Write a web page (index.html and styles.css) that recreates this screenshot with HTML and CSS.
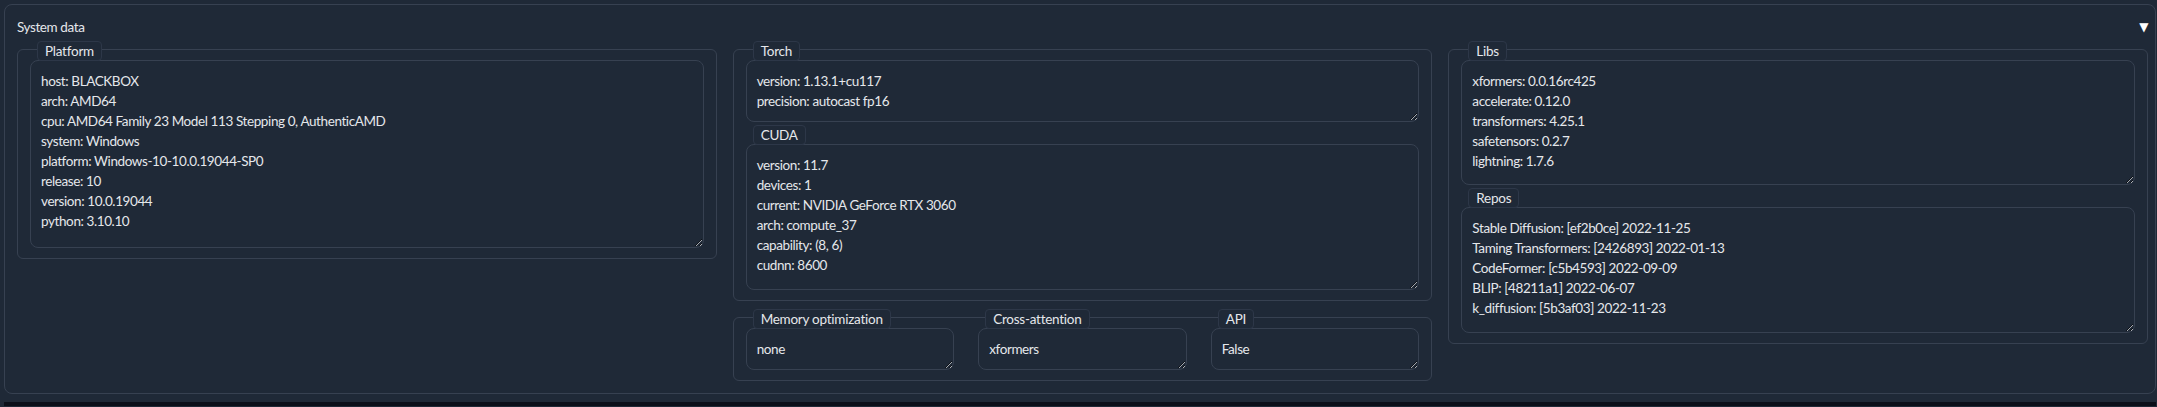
FILE: index.html
```html
<!DOCTYPE html>
<html lang="en">
<head>
  <meta charset="UTF-8">
  <meta name="viewport" content="width=device-width, initial-scale=1.0">
  <title>System data</title>
  <link rel="stylesheet" href="styles.css">
</head>
<body>
  <div class="panel">
    <div class="panel-header">
      <span>System data</span>
      <span class="arrow">&#9660;</span>
    </div>
    <div class="columns">
      <div class="group">
        <div class="label">Platform</div>
        <textarea class="box box-platform" readonly>host: BLACKBOX
arch: AMD64
cpu: AMD64 Family 23 Model 113 Stepping 0, AuthenticAMD
system: Windows
platform: Windows-10-10.0.19044-SP0
release: 10
version: 10.0.19044
python: 3.10.10</textarea>
      </div>
      <div class="stack">
        <div class="group">
          <div class="label">Torch</div>
          <textarea class="box box-torch" readonly>version: 1.13.1+cu117
precision: autocast fp16</textarea>
          <div class="label label-sub">CUDA</div>
          <textarea class="box box-cuda" readonly>version: 11.7
devices: 1
current: NVIDIA GeForce RTX 3060
arch: compute_37
capability: (8, 6)
cudnn: 8600</textarea>
        </div>
        <div class="group group-row">
          <div class="cell">
            <div class="label">Memory optimization</div>
            <textarea class="box box-small" readonly>none</textarea>
          </div>
          <div class="cell">
            <div class="label">Cross-attention</div>
            <textarea class="box box-small" readonly>xformers</textarea>
          </div>
          <div class="cell">
            <div class="label">API</div>
            <textarea class="box box-small" readonly>False</textarea>
          </div>
        </div>
      </div>
      <div class="group">
        <div class="label">Libs</div>
        <textarea class="box box-libs" readonly>xformers: 0.0.16rc425
accelerate: 0.12.0
transformers: 4.25.1
safetensors: 0.2.7
lightning: 1.7.6</textarea>
        <div class="label label-sub">Repos</div>
        <textarea class="box box-repos" readonly>Stable Diffusion: [ef2b0ce] 2022-11-25
Taming Transformers: [2426893] 2022-01-13
CodeFormer: [c5b4593] 2022-09-09
BLIP: [48211a1] 2022-06-07
k_diffusion: [5b3af03] 2022-11-23</textarea>
      </div>
    </div>
  </div>
  <div class="bottom-strip"></div>
</body>
</html>
```

FILE: styles.css
```css
*{
  margin: 0;
  padding: 0;
  box-sizing: border-box;
}
html,body{
  background-color: #1f2937;
  height: 100%;
}
body{
  color: #e5e7eb;
  font-family: Lato, "Noto Sans", sans-serif;
  font-size: 13.5px;
  letter-spacing: -0.4px;
  line-height: 20px;
  padding: 4px 1px 0 4px;
  overflow: hidden;
}
.panel{
  border: 1px solid #374151;
  border-radius: 8px;
  padding: 12px 7px 12px 12px;
}
.panel-header{
  display: flex;
  justify-content: space-between;
  align-items: center;
  height: 20px;
}
.arrow{
  font-family: "DejaVu Sans", sans-serif;
  font-size: 12px;
  color: #fff;
}
.columns{
  display: grid;
  grid-template-columns: repeat(3, 1fr);
  gap: 16px;
  align-items: start;
  margin-top: 12px;
}
.stack{
  display: flex;
  flex-direction: column;
  gap: 16px;
}
.group{
  border: 1px solid #374151;
  border-radius: 6px;
  padding: 0 12px 10px;
}
.group-row{
  display: flex;
  padding: 0;
}
.cell{
  flex: 1;
  padding: 0 12px 10px;
}
.label{
  width: fit-content;
  margin: -9px 0 0 7px;
  padding: 0 7px;
  line-height: 18px;
  font-size: 13.5px;
  letter-spacing: -0.25px;
  border: 1px solid #2d3748;
  border-radius: 4px;
  background-color: #1f2937;
  position: relative;
  z-index: 1;
}
.label-sub{
  margin-top: 3px;
}
.box{
  display: block;
  width: 100%;
  margin-top: -1px;
  padding: 10px;
  font: inherit;
  letter-spacing: inherit;
  line-height: 20px;
  color: #e5e7eb;
  background-color: #1f2937;
  border: 1px solid #374151;
  border-radius: 8px;
  outline: none;
  resize: vertical;
  overflow: hidden;
}
.box-platform{ height: 188px; }
.box-torch{ height: 62px; }
.box-cuda{ height: 146px; }
.box-libs{ height: 125px; }
.box-repos{ height: 126px; }
.box-small{ height: 42px; }
.bottom-strip{
  height: 4px;
  margin-top: 8px;
  background-color: #0b0f19;
}
```
